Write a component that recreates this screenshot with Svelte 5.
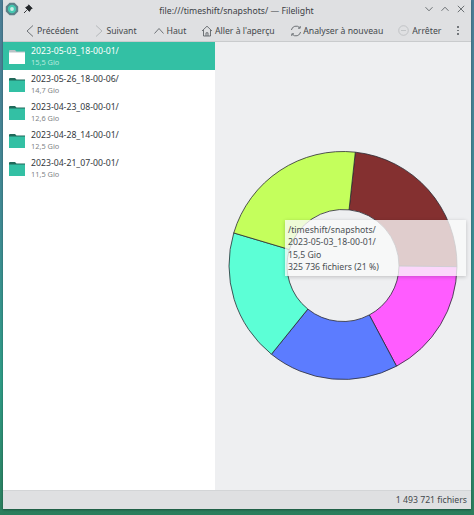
<script>
  const cx = 128, cy = 125.5, R = 114, r = 56;
  const pt = (rad, deg) => {
    const a = (deg * Math.PI) / 180;
    return `${(cx + rad * Math.sin(a)).toFixed(2)} ${(cy - rad * Math.cos(a)).toFixed(2)}`;
  };
  const seg = (a, b) =>
    `M${pt(R, a)} A${R} ${R} 0 ${b - a > 180 ? 1 : 0} 1 ${pt(R, b)} L${pt(r, b)} A${r} ${r} 0 ${b - a > 180 ? 1 : 0} 0 ${pt(r, a)} Z`;
  const segments = [
    { a: 6.2, b: 90.6, c: '#843030' },
    { a: 90.6, b: 152, c: '#ff5cff' },
    { a: 152, b: 218.9, c: '#5c7cff' },
    { a: 218.9, b: 286.6, c: '#5cffd6' },
    { a: 286.6, b: 366.2, c: '#c4ff5c' }
  ];
  const rows = [
    { name: '2023-05-03_18-00-01/', size: '15,5 Gio', selected: true },
    { name: '2023-05-26_18-00-06/', size: '14,7 Gio' },
    { name: '2023-04-23_08-00-01/', size: '12,6 Gio' },
    { name: '2023-04-28_14-00-01/', size: '12,5 Gio' },
    { name: '2023-04-21_07-00-01/', size: '11,5 Gio' }
  ];
</script>

<div class="window">
  <header class="titlebar">
    <div class="title-left">
      <svg class="app-icon" width="14" height="14" viewBox="0 0 14 14">
        <path d="M4.6.8h4.8L13.2 4.6v4.8L9.4 13.2H4.6L.8 9.4V4.6Z" fill="#5b8088" />
        <circle cx="7" cy="7" r="4.2" fill="#45c7b0" />
        <circle cx="7" cy="7" r="1.9" fill="#c9efe6" />
      </svg>
      <svg class="pin" width="10" height="10" viewBox="0 0 10 10">
        <path d="M5.6.8 9.2 4.4 7.8 4.9 6.4 7.4 2.6 3.6 5.1 2.2Z M3.8 6.2 1 9" fill="#232629" stroke="#232629" stroke-width=".9" />
      </svg>
    </div>
    <span class="title">file:///timeshift/snapshots/ — Filelight</span>
    <div class="title-right">
      <svg width="10" height="10" viewBox="0 0 10 10"><path d="M1.5 3.2 5 6.8 8.5 3.2" /></svg>
      <svg width="10" height="10" viewBox="0 0 10 10"><path d="M1.5 6.8 5 3.2 8.5 6.8" /></svg>
      <svg width="10" height="10" viewBox="0 0 10 10"><path d="M1.8 1.8 8.2 8.2M8.2 1.8 1.8 8.2" /></svg>
    </div>
  </header>

  <nav class="toolbar">
    <span class="tool prev">
      <svg width="10" height="14" viewBox="0 0 10 14"><path d="M8 1.5 2 7 8 12.5" /></svg>
      Précédent
    </span>
    <span class="tool next dim-icon">
      <svg width="10" height="14" viewBox="0 0 10 14"><path d="M2 1.5 8 7 2 12.5" /></svg>
      Suivant
    </span>
    <span class="tool up">
      <svg width="12" height="10" viewBox="0 0 12 10"><path d="M1.5 7.5 6 2.5 10.5 7.5" /></svg>
      Haut
    </span>
    <span class="tool home">
      <svg width="12" height="12" viewBox="0 0 12 12"><path d="M1 6 6 1.2 11 6M2.5 5v6h7V5M5 11V7.8h2V11" /></svg>
      Aller à l'aperçu
    </span>
    <span class="tool redo">
      <svg width="12" height="12" viewBox="0 0 12 12"><path d="M1.4 5A4.8 4.8 0 0 1 9.6 2.6M10.6 7A4.8 4.8 0 0 1 2.4 9.4M8 3.2h2.2V1M4 8.8H1.8V11" /></svg>
      Analyser à nouveau
    </span>
    <span class="tool stop">
      <svg width="11" height="11" viewBox="0 0 11 11"><circle cx="5.5" cy="5.5" r="4.8" /><path d="M3 5.5h5" /></svg>
      Arrêter
    </span>
    <span class="more"><i></i><i></i><i></i></span>
  </nav>

  <main class="content">
    <ul class="list">
      {#each rows as row}
        <li class="row" class:selected={row.selected}>
          <svg class="folder" width="16" height="15" viewBox="0 0 16 15">
            <path d="M0 2a1 1 0 0 1 1-1h5l1.5 1.5H16V5H0Z" class="tab" />
            <rect x="0" y="3.5" width="16" height="11.5" class="body" />
          </svg>
          <div class="labels">
            <span class="name">{row.name}</span>
            <span class="size">{row.size}</span>
          </div>
        </li>
      {/each}
    </ul>
    <section class="map">
      <svg class="donut" width="256" height="250" viewBox="0 0 256 250">
        {#each segments as s}
          <path d={seg(s.a, s.b)} fill={s.c} stroke="#2b2b33" stroke-width="0.8" />
        {/each}
      </svg>
      <div class="tooltip">
        <div>/timeshift/snapshots/</div>
        <div>2023-05-03_18-00-01/</div>
        <div>15,5 Gio</div>
        <div>325 736 fichiers (21 %)</div>
      </div>
    </section>
  </main>

  <footer class="status">1 493 721 fichiers</footer>
</div>

<style>
  :global(body) {
    margin: 0;
    height: 515px;
    overflow: hidden;
    background: linear-gradient(180deg, #4d7d96 0, #3f8a93 220px, #2f9b86 380px, #2b7d5c 515px);
  }
  .window {
    width: 468px;
    height: 509px;
    margin-left: 3px;
    display: flex;
    flex-direction: column;
    font-family: 'Noto Sans', sans-serif;
    font-size: 8.7px;
    color: #31363b;
    background: #eff0f1;
    box-shadow: 0 1px 2px rgba(0, 0, 0, 0.35);
  }
  .titlebar {
    height: 20px;
    flex: none;
    display: flex;
    align-items: center;
    justify-content: center;
    position: relative;
    background: #dfe0e2;
  }
  .title {
    margin-left: -1px;
    padding-top: 1px;
    color: #3c4145;
  }
  .title-left {
    position: absolute;
    left: 2px;
    top: 2px;
    display: flex;
    align-items: center;
    gap: 4px;
  }
  .title-right {
    position: absolute;
    right: 5px;
    top: 4px;
    display: flex;
    gap: 6px;
  }
  .title-right svg path {
    fill: none;
    stroke: #5f6468;
    stroke-width: 0.9;
  }
  .toolbar {
    height: 22px;
    flex: none;
    display: flex;
    align-items: center;
    background: #dfe0e2;
    border-bottom: 1px solid #c9cbcd;
    box-sizing: border-box;
    padding: 0 0 0 22px;
    color: #43484c;
  }
  .tool {
    display: flex;
    align-items: center;
    gap: 2px;
    white-space: nowrap;
  }
  .tool svg {
    fill: none;
    stroke: #5a5f63;
    stroke-width: 0.85;
    flex: none;
  }
  .dim-icon svg { stroke: #aeb1b4; }
  .next { margin-left: 16px; }
  .up { margin-left: 16px; }
  .home { margin-left: 15px; gap: 1.5px; }
  .redo { margin-left: 15px; gap: 1.5px; }
  .stop { margin-left: 15px; gap: 3px; }
  .stop svg { stroke: #bcbec1; }
  .more {
    margin-left: 16px;
    display: flex;
    flex-direction: column;
    gap: 2px;
  }
  .more i {
    width: 1.5px;
    height: 1.5px;
    background: #73777b;
    display: block;
  }
  .content {
    flex: 1;
    min-height: 0;
    display: flex;
  }
  .list {
    width: 212px;
    flex: none;
    margin: 0;
    padding: 0;
    list-style: none;
    background: #fff;
  }
  .row {
    height: 28px;
    display: flex;
    align-items: center;
    gap: 6px;
    padding-left: 6px;
    box-sizing: border-box;
  }
  .folder .tab { fill: #21695a; }
  .folder .body { fill: #33c0a4; }
  .selected {
    background: #33c0a4;
    color: #fff;
  }
  .selected .folder .tab { fill: #b9c3c6; }
  .selected .folder .body { fill: #fff; }
  .labels {
    display: flex;
    flex-direction: column;
    line-height: 12px;
  }
  .name { font-size: 8.7px; color: #33383c; }
  .selected .name { color: #fff; }
  .size { font-size: 7.4px; line-height: 10px; color: #7f8487; }
  .selected .size { color: #b7ebdf; }
  .map {
    flex: 1;
    position: relative;
    background: #eeeff1;
  }
  .donut {
    display: block;
    margin-top: 98px;
  }
  .tooltip {
    position: absolute;
    left: 70px;
    top: 178px;
    width: 181px;
    height: 56px;
    box-sizing: border-box;
    padding: 3.5px 3px;
    background: rgba(250, 250, 250, 0.78);
    box-shadow: 0 1px 4px rgba(0, 0, 0, 0.2);
    color: #4a4f53;
    line-height: 12.6px;
    white-space: nowrap;
  }
  .status {
    height: 19px;
    flex: none;
    background: #dfe0e2;
    border-top: 1px solid #d3d5d7;
    box-sizing: border-box;
    text-align: right;
    padding-right: 4px;
    line-height: 18px;
    color: #43484c;
  }
</style>
